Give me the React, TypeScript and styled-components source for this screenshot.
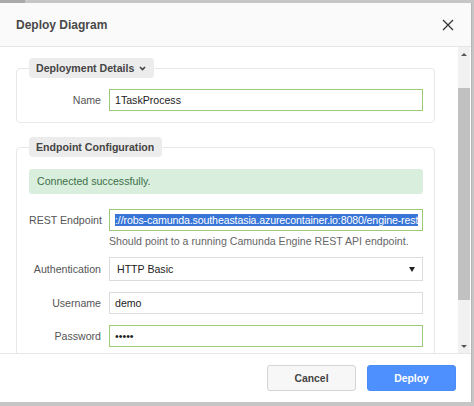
import styled, { createGlobalStyle } from "styled-components";

const GlobalStyle = createGlobalStyle`
  html, body {
    margin: 0;
    padding: 0;
    background: #c6c6c6;
  }
  body {
    font-family: "Liberation Sans", Arial, sans-serif;
    font-size: 10.6px;
    color: #333;
  }
  * {
    box-sizing: border-box;
  }
`;

const Backdrop = styled.div`
  width: 474px;
  height: 406px;
  overflow: hidden;
  background: #c6c6c6;
`;

const TopStrip = styled.div`
  height: 3px;
  display: flex;
`;

const StripBlock = styled.div`
  width: 25px;
  background: #a9a9a9;
`;

const Modal = styled.div`
  width: 472px;
  height: 399px;
  background: #fff;
  display: flex;
  flex-direction: column;
  border-right: 1px solid #b5b5b5;
`;

const Header = styled.div`
  height: 44px;
  flex: none;
  display: flex;
  align-items: center;
  justify-content: space-between;
  padding: 1px 17px 0 16px;
  background: #fafafa;
  border-bottom: 1px solid #e6e6e6;
`;

const Title = styled.h2`
  margin: 0;
  font-size: 12px;
  font-weight: bold;
  color: #484848;
`;

const CloseButton = styled.button`
  border: 0;
  background: none;
  padding: 0;
  width: 12px;
  height: 12px;
  display: flex;
  cursor: pointer;
`;

const Body = styled.div`
  flex: 1;
  display: flex;
  min-height: 0;
  border-bottom: 1px solid #e6e6e6;
`;

const Content = styled.div`
  flex: 1;
  overflow: hidden;
  padding: 11px 23px 0 16px;
`;

const Scrollbar = styled.div`
  width: 12px;
  flex: none;
  display: flex;
  flex-direction: column;
  background: #f1f1f1;
  margin-right: 1px;
`;

const ScrollArrow = styled.div<{ $down?: boolean }>`
  height: 14px;
  display: flex;
  align-items: center;
  justify-content: center;
  &::before {
    content: "";
    border-left: 3px solid transparent;
    border-right: 3px solid transparent;
    ${(p) =>
      p.$down
        ? "border-top: 3px solid #555;"
        : "border-bottom: 3px solid #555;"}
  }
`;

const ScrollTrack = styled.div`
  flex: 1;
  padding: 27px 0 39px;
  display: flex;
`;

const ScrollThumb = styled.div`
  flex: 1;
  background: #c1c1c1;
`;

const Fieldset = styled.fieldset`
  margin: 0 0 14px;
  padding: 2px 11px 11px 12px;
  border: 1px solid #e8e8e8;
  border-radius: 4px;
  min-width: 0;
`;

const Legend = styled.legend`
  height: 20px;
  padding: 0 8px 0 7px;
  margin-left: 0;
  background: #ececec;
  border-radius: 4px;
  font-size: 10.6px;
  font-weight: bold;
  color: #444;
  display: flex;
  align-items: center;
  gap: 5px;
`;

const Row = styled.div<{ $gap?: number }>`
  display: flex;
  align-items: flex-start;
  margin-top: ${(p) => p.$gap ?? 11}px;
`;

const Label = styled.label<{ $tall?: boolean }>`
  width: 80px;
  flex: none;
  text-align: right;
  padding-right: 8px;
  line-height: ${(p) => (p.$tall ? 24 : 22)}px;
  white-space: nowrap;
  color: #555;
`;

const Field = styled.div`
  flex: 1;
  min-width: 0;
`;

const Input = styled.div<{ $valid?: boolean }>`
  height: 22px;
  border: 1px solid ${(p) => (p.$valid ? "#9ccc7a" : "#dcdcdc")};
  padding: 0 4px 0 5px;
  line-height: 20px;
  color: #222;
  background: #fff;
  white-space: nowrap;
  overflow: hidden;
`;

const Selected = styled.span`
  background: #3875d7;
  color: #fff;
  letter-spacing: -0.12px;
`;

const Select = styled.div`
  height: 24px;
  border: 1px solid #dcdcdc;
  padding: 0 7px;
  display: flex;
  align-items: center;
  justify-content: space-between;
  color: #222;
  &::after {
    content: "";
    border-left: 3px solid transparent;
    border-right: 3px solid transparent;
    border-top: 5px solid #222;
  }
`;

const Help = styled.div`
  margin-top: 3px;
  line-height: 14px;
  color: #666;
`;

const Alert = styled.div`
  margin-top: 10px;
  height: 25px;
  padding: 0 8px;
  line-height: 25px;
  background: #d9eedc;
  color: #3b6e48;
  border-radius: 3px;
`;

const Footer = styled.div`
  height: 48px;
  flex: none;
  display: flex;
  justify-content: flex-end;
  align-items: center;
  gap: 11px;
  padding: 0 15px 0 0;
`;

const Button = styled.button<{ $primary?: boolean }>`
  width: 89px;
  height: 26px;
  border-radius: 3px;
  font-family: "Liberation Sans", Arial, sans-serif;
  font-size: 10.4px;
  font-weight: bold;
  cursor: pointer;
  border: 1px solid ${(p) => (p.$primary ? "#4a8cf7" : "#d4d4d4")};
  background: ${(p) => (p.$primary ? "#4d90fe" : "#f7f7f7")};
  color: ${(p) => (p.$primary ? "#fff" : "#444")};
`;

const CloseIcon = () => (
  <svg width="12" height="12" viewBox="0 0 12 12">
    <path d="M1 1 L11 11 M11 1 L1 11" stroke="#333" strokeWidth="1.3" />
  </svg>
);

const Chevron = () => (
  <svg width="7" height="5" viewBox="0 0 7 5">
    <path d="M1 1 L3.5 3.5 L6 1" stroke="#444" strokeWidth="1.6" fill="none" />
  </svg>
);

export default function App() {
  return (
    <Backdrop>
      <GlobalStyle />
      <TopStrip>
        <StripBlock />
      </TopStrip>
      <Modal>
        <Header>
          <Title>Deploy Diagram</Title>
          <CloseButton aria-label="Close">
            <CloseIcon />
          </CloseButton>
        </Header>
        <Body>
          <Content>
            <Fieldset>
              <Legend>
                Deployment Details <Chevron />
              </Legend>
              <Row $gap={9}>
                <Label>Name</Label>
                <Field>
                  <Input $valid>1TaskProcess</Input>
                </Field>
              </Row>
            </Fieldset>
            <Fieldset>
              <Legend>Endpoint Configuration</Legend>
              <Alert>Connected successfully.</Alert>
              <Row $gap={15}>
                <Label>REST Endpoint</Label>
                <Field>
                  <Input $valid>
                    <Selected>
                      ://robs-camunda.southeastasia.azurecontainer.io:8080/engine-rest
                    </Selected>
                  </Input>
                  <Help>Should point to a running Camunda Engine REST API endpoint.</Help>
                </Field>
              </Row>
              <Row $gap={9}>
                <Label $tall>Authentication</Label>
                <Field>
                  <Select>HTTP Basic</Select>
                </Field>
              </Row>
              <Row>
                <Label>Username</Label>
                <Field>
                  <Input>demo</Input>
                </Field>
              </Row>
              <Row>
                <Label>Password</Label>
                <Field>
                  <Input $valid>•••••</Input>
                </Field>
              </Row>
            </Fieldset>
          </Content>
          <Scrollbar>
            <ScrollArrow />
            <ScrollTrack>
              <ScrollThumb />
            </ScrollTrack>
            <ScrollArrow $down />
          </Scrollbar>
        </Body>
        <Footer>
          <Button>Cancel</Button>
          <Button $primary>Deploy</Button>
        </Footer>
      </Modal>
    </Backdrop>
  );
}
